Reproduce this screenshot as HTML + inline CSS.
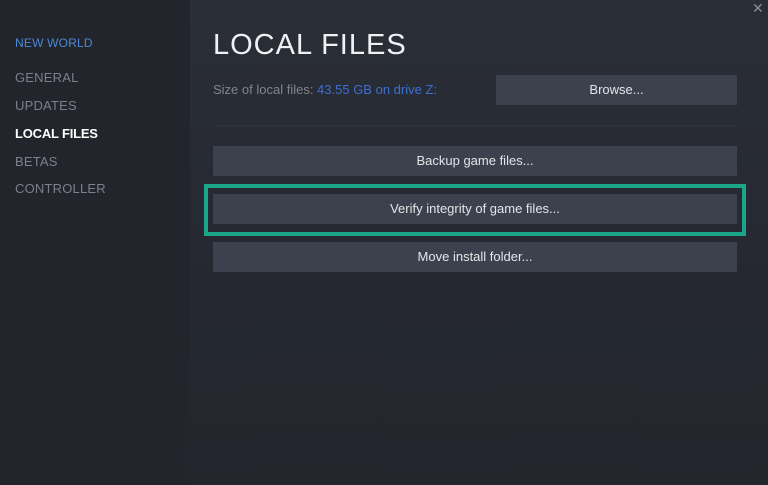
<!DOCTYPE html>
<html><head><style>
body{margin:0;width:768px;height:485px;overflow:hidden;background:#23262e;font-family:"Liberation Sans",sans-serif;position:relative}
.side{position:absolute;left:0;top:0;width:190px;height:485px;background:#22252b}
.main{position:absolute;left:190px;top:0;width:578px;height:485px;background:linear-gradient(180deg,#2a2e37 0%,#252830 60%,#23262d 100%)}
.nav{position:absolute;left:15px;font-size:13px;color:#7c8088;letter-spacing:.2px}
.btn{position:absolute;left:213px;width:524px;height:30px;background:#3c414d;color:#e3e5e8;font-size:13px;text-align:center;line-height:30px}
</style></head><body>
<div class="side"></div><div class="main"></div>
<div class="nav" style="top:36px;color:#4a8ad6;font-size:12px">NEW WORLD</div>
<div class="nav" style="top:70px">GENERAL</div>
<div class="nav" style="top:98px">UPDATES</div>
<div class="nav" style="top:126px;color:#fff;font-weight:bold;letter-spacing:-.2px">LOCAL FILES</div>
<div class="nav" style="top:154px">BETAS</div>
<div class="nav" style="top:181px">CONTROLLER</div>
<div style="position:absolute;left:213px;top:29px;font-size:29px;color:#f0f1f3;letter-spacing:1px">LOCAL FILES</div>
<div style="position:absolute;left:213px;top:82px;font-size:13px;color:#80848c">Size of local files: <span style="color:#3d6fd0">43.55 GB on drive Z:</span></div>
<div class="btn" style="left:496px;width:241px;top:75px">Browse...</div>
<div style="position:absolute;left:213px;top:125px;width:524px;height:1px;background:#30343d"></div>
<div class="btn" style="top:146px">Backup game files...</div>
<div style="position:absolute;left:204px;top:184px;width:534px;height:44px;border:4px solid #1ba68a"></div>
<div class="btn" style="top:194px">Verify integrity of game files...</div>
<div class="btn" style="top:242px">Move install folder...</div>
<div style="position:absolute;left:752px;top:0px;color:#8a8e96;font-size:14px">✕</div>
</body></html>
